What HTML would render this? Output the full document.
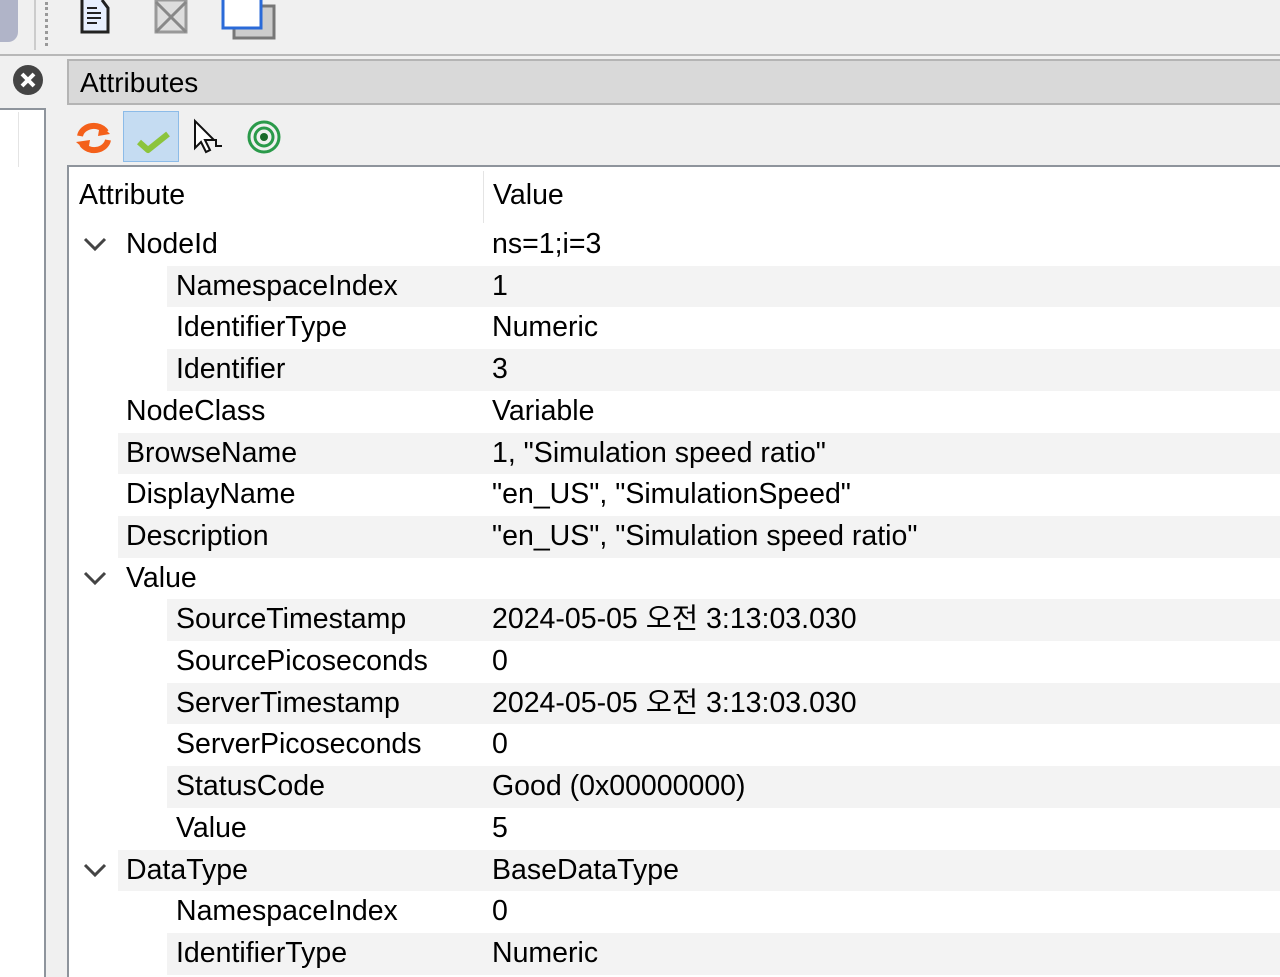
<!DOCTYPE html>
<html><head><meta charset="utf-8"><style>
*{margin:0;padding:0;box-sizing:border-box}
body{width:1280px;height:977px;overflow:hidden;background:#f0f0f0;font-family:"Liberation Sans","Noto Sans CJK KR",sans-serif;color:#000;position:relative}
.abs{position:absolute}
.row{position:absolute;left:0;width:1213px;height:41.7px;font-size:28.5px;line-height:41.7px;white-space:nowrap}
.row .sh{position:absolute;top:0;bottom:0;right:0;background:#f3f3f3}
.row .k{position:absolute;top:0}
.row .v{position:absolute;left:423px;top:0}
.chev{position:absolute;left:14px;top:10px}
</style></head><body>
<div class="abs" style="left:0;top:0;width:1280px;height:55px;background:#f0f0f0"></div>
<div class="abs" style="left:0;top:54px;width:1280px;height:2px;background:#b8b8b8"></div>
<div class="abs" style="left:0;top:0;width:18px;height:42px;background:#b0b4c8;border-radius:0 0 10px 0"></div>
<div class="abs" style="left:34px;top:0;width:2px;height:50px;background:#ccc"></div>
<div class="abs" style="left:45px;top:2px;width:3px;height:44px;border-left:3px dotted #999"></div>
<svg class="abs" style="left:80px;top:0" width="32" height="36"><path d="M2 0 V32 H28 V8 L22 0" fill="#e8f0ff" stroke="#222" stroke-width="3"/><path d="M7 8h10M7 13h14M7 18h14M7 23h10" stroke="#222" stroke-width="2"/></svg>
<svg class="abs" style="left:152px;top:0" width="40" height="36"><rect x="4" y="0" width="30" height="32" fill="#ddd" stroke="#999" stroke-width="3"/><path d="M4 2L34 32M34 2L4 32" stroke="#888" stroke-width="3"/></svg>
<svg class="abs" style="left:220px;top:0" width="58" height="40"><rect x="14" y="6" width="40" height="32" fill="#ccc" stroke="#777" stroke-width="3"/><rect x="3" y="-4" width="38" height="32" fill="#fff" stroke="#2a6ad8" stroke-width="3"/></svg>
<div class="abs" style="left:0;top:108px;width:46px;height:869px;background:#fff;border-top:2px solid #8e949c;border-right:2px solid #8e949c"></div>
<div class="abs" style="left:18px;top:112px;width:1px;height:55px;background:#e4e4e4"></div>
<svg class="abs" style="left:12px;top:64px" width="34" height="34"><circle cx="16" cy="16" r="15" fill="#444"/><path d="M10 10L22 22M22 10L10 22" stroke="#fff" stroke-width="4"/></svg>
<div class="abs" style="left:67px;top:59px;width:1213px;height:46px;background:#d9d9d9;border-top:2px solid #b4b4b4;border-bottom:2px solid #b4b4b4;border-left:2px solid #b4b4b4;font-size:28px;line-height:44px;padding-left:11px">Attributes</div>
<svg class="abs" style="left:72px;top:118px" width="44" height="40"><path d="M8 18 A14 12 0 0 1 34 14" fill="none" stroke="#f4601a" stroke-width="6"/><path d="M28 6 L38 16 L26 18Z" fill="#f4601a"/><path d="M36 22 A14 12 0 0 1 10 26" fill="none" stroke="#f4601a" stroke-width="6"/><path d="M16 34 L4 24 L18 22Z" fill="#f4601a"/></svg>
<div class="abs" style="left:123px;top:111px;width:56px;height:51px;background:#c5dcf2;border:1px solid #8cbbe8"></div>
<svg class="abs" style="left:136px;top:126px" width="36" height="30"><path d="M3 16 L12 24 L32 8" fill="none" stroke="#8cc43c" stroke-width="6" stroke-linejoin="round"/></svg>
<svg class="abs" style="left:192px;top:118px" width="32" height="40"><path d="M3 3 V30 L9 24 L14 34 L18 32 L13 22 H22Z" fill="#fff" stroke="#111" stroke-width="2"/><path d="M18 22h6v6h6" fill="none" stroke="#111" stroke-width="2"/></svg>
<svg class="abs" style="left:246px;top:119px" width="36" height="36"><circle cx="18" cy="18" r="15" fill="none" stroke="#2a9a4a" stroke-width="3"/><circle cx="18" cy="18" r="9" fill="none" stroke="#2a9a4a" stroke-width="3"/><circle cx="18" cy="18" r="4" fill="#1a6a2a"/></svg>
<div class="abs" style="left:67px;top:165px;width:1213px;height:812px;background:#fff;border-top:2px solid #8e949c;border-left:2px solid #8e949c;overflow:hidden">
<div class="abs" style="left:10px;top:12px;font-size:28.5px">Attribute</div>
<div class="abs" style="left:414px;top:4px;width:1px;height:52px;background:#e4e4e4"></div>
<div class="abs" style="left:424px;top:12px;font-size:28.5px">Value</div>
<div class="abs" style="left:0;top:57px;width:1213px;height:800px">
<div class="row" style="top:0"><svg class="chev" width="24" height="20"><path d="M2 5L12 15L22 5" fill="none" stroke="#444" stroke-width="3"/></svg><span class="k" style="left:57px">NodeId</span><span class="v">ns=1;i=3</span></div>
<div class="row" style="top:41.7px"><div class="sh" style="left:98px"></div><span class="k" style="left:107px">NamespaceIndex</span><span class="v">1</span></div>
<div class="row" style="top:83.4px"><span class="k" style="left:107px">IdentifierType</span><span class="v">Numeric</span></div>
<div class="row" style="top:125.1px"><div class="sh" style="left:98px"></div><span class="k" style="left:107px">Identifier</span><span class="v">3</span></div>
<div class="row" style="top:166.8px"><span class="k" style="left:57px">NodeClass</span><span class="v">Variable</span></div>
<div class="row" style="top:208.5px"><div class="sh" style="left:49px"></div><span class="k" style="left:57px">BrowseName</span><span class="v">1, "Simulation speed ratio"</span></div>
<div class="row" style="top:250.2px"><span class="k" style="left:57px">DisplayName</span><span class="v">"en_US", "SimulationSpeed"</span></div>
<div class="row" style="top:291.9px"><div class="sh" style="left:49px"></div><span class="k" style="left:57px">Description</span><span class="v">"en_US", "Simulation speed ratio"</span></div>
<div class="row" style="top:333.6px"><svg class="chev" width="24" height="20"><path d="M2 5L12 15L22 5" fill="none" stroke="#444" stroke-width="3"/></svg><span class="k" style="left:57px">Value</span></div>
<div class="row" style="top:375.3px"><div class="sh" style="left:98px"></div><span class="k" style="left:107px">SourceTimestamp</span><span class="v">2024-05-05 오전 3:13:03.030</span></div>
<div class="row" style="top:417px"><span class="k" style="left:107px">SourcePicoseconds</span><span class="v">0</span></div>
<div class="row" style="top:458.7px"><div class="sh" style="left:98px"></div><span class="k" style="left:107px">ServerTimestamp</span><span class="v">2024-05-05 오전 3:13:03.030</span></div>
<div class="row" style="top:500.4px"><span class="k" style="left:107px">ServerPicoseconds</span><span class="v">0</span></div>
<div class="row" style="top:542.1px"><div class="sh" style="left:98px"></div><span class="k" style="left:107px">StatusCode</span><span class="v">Good (0x00000000)</span></div>
<div class="row" style="top:583.8px"><span class="k" style="left:107px">Value</span><span class="v">5</span></div>
<div class="row" style="top:625.5px"><div class="sh" style="left:49px"></div><svg class="chev" width="24" height="20"><path d="M2 5L12 15L22 5" fill="none" stroke="#444" stroke-width="3"/></svg><span class="k" style="left:57px">DataType</span><span class="v">BaseDataType</span></div>
<div class="row" style="top:667.2px"><span class="k" style="left:107px">NamespaceIndex</span><span class="v">0</span></div>
<div class="row" style="top:708.9px"><div class="sh" style="left:98px"></div><span class="k" style="left:107px">IdentifierType</span><span class="v">Numeric</span></div>
</div>
</div>
</body></html>
